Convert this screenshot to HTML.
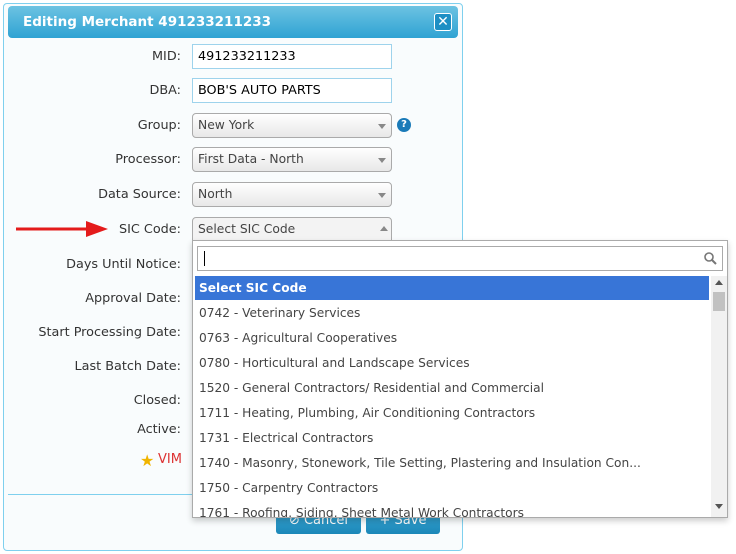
<!DOCTYPE html>
<html><head><style>
*{box-sizing:border-box;margin:0;padding:0}
body{width:736px;height:554px;background:#fff;font-family:"DejaVu Sans",Verdana,sans-serif;font-size:12.5px;color:#333;position:relative;overflow:hidden}
.dlg{position:absolute;left:3px;top:3px;width:460px;height:548px;border:1px solid #7fd0ee;border-radius:4px;background:#f9fcfd}
.hdr{position:absolute;left:8px;top:6px;width:450px;height:32px;border-radius:4px;background:linear-gradient(#6cc3e2,#2fa3d3);color:#fff;font-weight:bold;font-size:13.5px;line-height:32px;padding-left:15px}
.x{position:absolute;right:6px;top:7px;width:18px;height:18px;border:1px solid #fff;border-radius:3px;background:#1e8fc4;color:#fff;text-align:center;line-height:16px;font-size:14px;font-weight:bold}
.lbl{position:absolute;left:0;width:181px;text-align:right;font-size:12.8px;color:#333}
.inp{position:absolute;left:192px;width:200px;height:25px;border:1px solid #9ed3ec;background:#fff;padding-left:5px;line-height:23px;font-size:12.8px;color:#000}
.sel{position:absolute;left:192px;width:200px;height:25px;border:1px solid #aaa;border-radius:4px;background:linear-gradient(#fff,#e8e8e8);padding-left:5px;line-height:23px;font-size:12.3px;color:#444}
.arr:after{content:"";position:absolute;right:5px;top:10px;border-left:4px solid transparent;border-right:4px solid transparent;border-top:5px solid #888}
.dd{position:absolute;left:192px;top:240px;width:536px;height:278px;border:1px solid #aaa;background:#fff;box-shadow:0 3px 6px rgba(0,0,0,.2);overflow:hidden}
.srch{position:absolute;left:4px;top:5px;width:526px;height:25px;border:1px solid #aaa}
.row{position:absolute;left:2px;width:514px;height:24px;line-height:24px;padding-left:4px;font-size:12.2px;color:#444;white-space:nowrap}
.btn{position:absolute;top:509px;height:25px;border-radius:3px;background:linear-gradient(#3aa9d6,#1c87b8);color:#fff;font-size:13px;line-height:24px;text-align:center}
</style></head><body>
<div class="dlg"></div>
<div class="hdr">Editing Merchant 491233211233<div class="x">✕</div></div>
<div class="lbl" style="top:49px">MID:</div>
<div class="inp" style="top:44px">491233211233</div>
<div class="lbl" style="top:83px">DBA:</div>
<div class="inp" style="top:78px">BOB'S AUTO PARTS</div>
<div class="lbl" style="top:118px">Group:</div>
<div class="sel arr" style="top:113px">New York</div>
<div style="position:absolute;left:397px;top:118px;width:14px;height:14px;border-radius:50%;background:#1a7ab8;color:#fff;font-size:10px;font-weight:bold;text-align:center;line-height:14px">?</div>
<div class="lbl" style="top:152px">Processor:</div>
<div class="sel arr" style="top:147px">First Data - North</div>
<div class="lbl" style="top:187px">Data Source:</div>
<div class="sel arr" style="top:182px">North</div>
<div class="lbl" style="top:222px">SIC Code:</div>
<div class="sel" style="top:217px;border-radius:4px 4px 0 0;height:24px;background:#f3f3f3">Select SIC Code</div>
<div style="position:absolute;left:380px;top:226px;border-left:4px solid transparent;border-right:4px solid transparent;border-bottom:5px solid #888"></div>
<svg style="position:absolute;left:16px;top:221px" width="92" height="16"><line x1="0" y1="8" x2="74" y2="8" stroke="#e41b1b" stroke-width="3"/><polygon points="70,0 92,8 70,16" fill="#e41b1b"/></svg>
<div class="lbl" style="top:257px">Days Until Notice:</div>
<div class="lbl" style="top:291px">Approval Date:</div>
<div class="lbl" style="top:325px">Start Processing Date:</div>
<div class="lbl" style="top:359px">Last Batch Date:</div>
<div class="lbl" style="top:393px">Closed:</div>
<div class="lbl" style="top:422px">Active:</div>
<div style="position:absolute;left:140px;top:451px;color:#f0b400;font-size:16px">★</div>
<div style="position:absolute;left:158px;top:452px;color:#d33;font-size:13px">VIM</div>
<div style="position:absolute;left:8px;top:494px;width:450px;height:1px;background:#7fd0ee"></div>
<div class="btn" style="left:276px;width:85px">⊘ Cancel</div>
<div class="btn" style="left:366px;width:74px">+ Save</div>
<div class="dd">
<div class="srch"><div style="position:absolute;left:6px;top:4px;width:1px;height:15px;background:#000"></div>
<svg style="position:absolute;right:5px;top:5px" width="13" height="13"><circle cx="5" cy="5" r="4" fill="none" stroke="#777" stroke-width="1.6"/><line x1="8" y1="8" x2="12" y2="12" stroke="#777" stroke-width="2"/></svg></div>
<div class="row" style="top:35px;background:#3875d7;color:#fff;font-weight:bold">Select SIC Code</div>
<div class="row" style="top:60px">0742 - Veterinary Services</div>
<div class="row" style="top:85px">0763 - Agricultural Cooperatives</div>
<div class="row" style="top:110px">0780 - Horticultural and Landscape Services</div>
<div class="row" style="top:135px">1520 - General Contractors/ Residential and Commercial</div>
<div class="row" style="top:160px">1711 - Heating, Plumbing, Air Conditioning Contractors</div>
<div class="row" style="top:185px">1731 - Electrical Contractors</div>
<div class="row" style="top:210px">1740 - Masonry, Stonework, Tile Setting, Plastering and Insulation Con...</div>
<div class="row" style="top:235px">1750 - Carpentry Contractors</div>
<div class="row" style="top:260px">1761 - Roofing, Siding, Sheet Metal Work Contractors</div>
<div style="position:absolute;left:518px;top:35px;width:16px;height:241px;background:#f1f1f1"></div>
<div style="position:absolute;left:520px;top:51px;width:12px;height:19px;background:#c1c1c1"></div>
<div style="position:absolute;left:522px;top:39px;border-left:4px solid transparent;border-right:4px solid transparent;border-bottom:5px solid #555"></div>
<div style="position:absolute;left:522px;top:263px;border-left:4px solid transparent;border-right:4px solid transparent;border-top:5px solid #555"></div>
</div>
</body></html>
